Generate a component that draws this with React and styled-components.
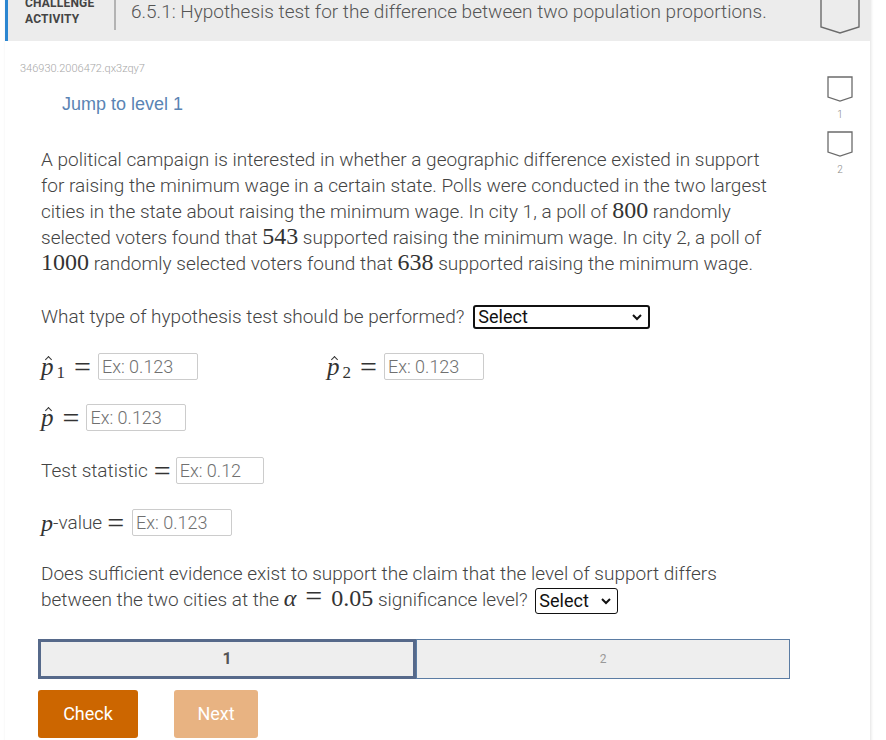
import React from 'react';
import styled, { createGlobalStyle, css } from 'styled-components';

const GlobalStyle = createGlobalStyle`
  html, body {
    margin: 0;
    padding: 0;
    background: #fff;
  }
  body {
    font-family: Roboto, "Noto Sans", sans-serif;
    overflow: hidden;
  }
`;

const Activity = styled.div`
  margin: -14px 0 0 5px;
  width: 865px;
  min-height: 780px;
  box-shadow: 1px 0 3px rgba(0, 0, 0, 0.12);
`;

const Header = styled.header`
  display: flex;
  align-items: flex-start;
  height: 55px;
  box-sizing: border-box;
  background: #ececec;
  border-left: 3px solid #2b86d1;
  padding: 9px 10px 0 17px;
`;

const Kind = styled.div`
  width: 89px;
  font: 700 12px/16px Roboto, sans-serif;
  color: #444;
  text-transform: uppercase;
  letter-spacing: 0.2px;
`;

const Divider = styled.div`
  width: 2px;
  align-self: stretch;
  margin: -9px 15px 11px 0;
  background: #b3b3b3;
`;

const Title = styled.h1`
  margin: 5px 0 0;
  font: 300 19px/24px Roboto, sans-serif;
  color: #555;
`;

const HeaderBadge = styled.svg`
  margin: -9px 0 0 auto;
  flex-shrink: 0;
`;

const Body = styled.div`
  display: flex;
`;

const Main = styled.main`
  flex: 1;
  padding: 21px 0 0 15px;
`;

const ActivityId = styled.div`
  font: 300 11px/14px Roboto, sans-serif;
  color: #a8a8a8;
`;

const JumpLink = styled.a`
  display: block;
  margin: 17px 0 0 42px;
  font: 400 18px/22px "Liberation Sans", Arial, sans-serif;
  color: #5a84b4;
  text-decoration: none;
`;

const Problem = styled.div`
  width: 752px;
  margin: 32px 0 0 18px;
  display: flex;
  flex-direction: column;
`;

const Para = styled.p`
  margin: ${p => p.$top || 0}px 0 0;
  padding-left: 3px;
  max-width: 741px;
  font: 300 19px/26px Roboto, sans-serif;
  color: #444;
`;

const Row = styled.div`
  display: flex;
  align-items: center;
  height: 27px;
  padding-left: 3px;
  margin-top: ${p => p.$top || 24}px;
  font: 300 19px/26px Roboto, sans-serif;
  color: #444;
`;

const Group = styled.div`
  display: flex;
  align-items: center;
  width: ${p => (p.$w ? `${p.$w}px` : 'auto')};
`;

const M = styled.span`
  font-family: "Liberation Serif", "DejaVu Serif", serif;
  font-size: 24px;
  line-height: 0;
  font-weight: 400;
  color: #333;
  font-style: ${p => (p.$i ? 'italic' : 'normal')};
`;

const Hat = styled.span`
  position: relative;
  display: inline-block;
  font-family: "Liberation Serif", "DejaVu Serif", serif;
  font-style: italic;
  font-size: 25px;
  line-height: 1;
  color: #333;

  &::before {
    content: '';
    position: absolute;
    left: 5px;
    top: 3px;
    width: 4px;
    height: 4px;
    border-left: 1.3px solid #333;
    border-top: 1.3px solid #333;
    transform: rotate(45deg);
  }
`;

const Sub = styled.span`
  font-family: "Liberation Serif", "DejaVu Serif", serif;
  font-size: 17px;
  line-height: 1;
  position: relative;
  top: 6px;
  margin-left: 3px;
  color: #333;
`;

const Eq = styled.span`
  font-family: "Liberation Serif", "DejaVu Serif", serif;
  font-size: 30px;
  line-height: 0;
  color: #333;
  margin: 0 ${p => p.$r ?? 7}px 0 ${p => p.$l ?? 9}px;
`;

const Input = styled.input`
  box-sizing: border-box;
  width: ${p => p.$w || 100}px;
  height: 27px;
  border: 1px solid #ccc;
  border-radius: 2px;
  padding: 0 3px;
  font: 300 18px Roboto, sans-serif;
  color: #333;
  background: #fff;

  &::placeholder {
    color: #707070;
  }
`;

const Select = styled.span`
  display: inline-flex;
  align-items: center;
  justify-content: space-between;
  box-sizing: border-box;
  width: ${p => p.$w}px;
  height: ${p => (p.$focus ? 24 : 26)}px;
  padding: 0 5px 0 3px;
  border: ${p => (p.$focus ? 2 : 1)}px solid #111;
  border-radius: 3px;
  font: 400 18px/20px Roboto, sans-serif;
  color: #111;
  vertical-align: middle;
  margin-left: ${p => p.$ml || 0}px;
`;

const LevelBar = styled.div`
  display: flex;
  height: 40px;
  margin-top: 25px;
`;

const LevelSeg = styled.div`
  box-sizing: border-box;
  display: flex;
  align-items: center;
  justify-content: center;
  background: #eeeeee;
  font-family: Roboto, sans-serif;
  ${p =>
    p.$active
      ? css`
          width: 378px;
          border: 3px solid #56698a;
          font-size: 16px;
          font-weight: 700;
          color: #555;
        `
      : css`
          flex: 1;
          border: 1px solid #5b7ca3;
          font-size: 12px;
          color: #999;
        `}
`;

const Buttons = styled.div`
  display: flex;
  gap: 36px;
  margin-top: 11px;
`;

const Button = styled.button`
  height: 48px;
  width: ${p => p.$w}px;
  border: none;
  border-radius: 3px;
  font: 400 18px Roboto, sans-serif;
  color: #fff;
  background: ${p => (p.disabled ? '#e8b382' : '#cc6600')};
`;

const LevelNav = styled.nav`
  width: 60px;
  padding-top: 35px;
  display: flex;
  flex-direction: column;
  align-items: center;
`;

const LevelItem = styled.div`
  display: flex;
  flex-direction: column;
  align-items: center;
  margin-bottom: 9px;
`;

const LevelNum = styled.span`
  font: 300 10px/14px Roboto, sans-serif;
  color: #888;
  margin-top: 6px;
`;

const Chevron = () => (
  <svg width="12" height="8" viewBox="0 0 12 8">
    <path d="M2 2 L6 6 L10 2" fill="none" stroke="#111" strokeWidth="2" />
  </svg>
);

const Shield = ({ w, h, tip }) => (
  <svg width={w} height={h} viewBox={`0 0 ${w} ${h}`}>
    <path
      d={`M1 1 V${h - tip - 1} L${w / 2} ${h - 1} L${w - 1} ${h - tip - 1} V1 Z`}
      fill="none"
      stroke="#6b6b6b"
      strokeWidth="1.3"
    />
  </svg>
);

const PHat = ({ sub }) => (
  <>
    <Hat>p</Hat>
    {sub && <Sub>{sub}</Sub>}
  </>
);

export default function App() {
  return (
    <>
      <GlobalStyle />
      <Activity>
        <Header>
          <Kind>
            Challenge
            <br />
            Activity
          </Kind>
          <Divider />
          <Title>6.5.1: Hypothesis test for the difference between two population proportions.</Title>
          <HeaderBadge width="40" height="48" viewBox="0 0 40 48">
            <path d="M1 0 V41 L20 47 L39 41 V0" fill="none" stroke="#6b6b6b" strokeWidth="1.4" />
          </HeaderBadge>
        </Header>
        <Body>
          <Main>
            <ActivityId>346930.2006472.qx3zqy7</ActivityId>
            <JumpLink href="#">Jump to level 1</JumpLink>
            <Problem>
              <Para>
                A political campaign is interested in whether a geographic difference existed in support for
                raising the minimum wage in a certain state. Polls were conducted in the two largest cities in the
                state about raising the minimum wage. In city 1, a poll of <M>800</M> randomly selected voters found
                that <M>543</M> supported raising the minimum wage. In city 2, a poll of <M>1000</M> randomly
                selected voters found that <M>638</M> supported raising the minimum wage.
              </Para>
              <Row $top={26}>
                What type of hypothesis test should be performed?
                <Select $w={177} $focus $ml={9}>
                  Select
                  <Chevron />
                </Select>
              </Row>
              <Row $top={23}>
                <Group $w={286}>
                  <PHat sub="1" />
                  <Eq>=</Eq>
                  <Input placeholder="Ex: 0.123" />
                </Group>
                <Group>
                  <PHat sub="2" />
                  <Eq>=</Eq>
                  <Input placeholder="Ex: 0.123" />
                </Group>
              </Row>
              <Row>
                <PHat />
                <Eq>=</Eq>
                <Input placeholder="Ex: 0.123" />
              </Row>
              <Row $top={26}>
                Test statistic
                <Eq $l={6} $r={5}>=</Eq>
                <Input $w={88} placeholder="Ex: 0.12" />
              </Row>
              <Row $top={25}>
                <M $i>p</M>-value
                <Eq $l={5} $r={8}>=</Eq>
                <Input placeholder="Ex: 0.123" />
              </Row>
              <Para $top={25}>
                Does sufficient evidence exist to support the claim that the level of support differs between the
                two cities at the <M $i>α</M><Eq $l={9} $r={9}>=</Eq><M>0.05</M> significance level?{' '}
                <Select $w={83} $ml={3}>
                  Select
                  <Chevron />
                </Select>
              </Para>
              <LevelBar>
                <LevelSeg $active>1</LevelSeg>
                <LevelSeg>2</LevelSeg>
              </LevelBar>
              <Buttons>
                <Button $w={100}>Check</Button>
                <Button $w={84} disabled>
                  Next
                </Button>
              </Buttons>
            </Problem>
          </Main>
          <LevelNav>
            <LevelItem>
              <Shield w={26} h={26} tip={4} />
              <LevelNum>1</LevelNum>
            </LevelItem>
            <LevelItem>
              <Shield w={26} h={26} tip={4} />
              <LevelNum>2</LevelNum>
            </LevelItem>
          </LevelNav>
        </Body>
      </Activity>
    </>
  );
}
